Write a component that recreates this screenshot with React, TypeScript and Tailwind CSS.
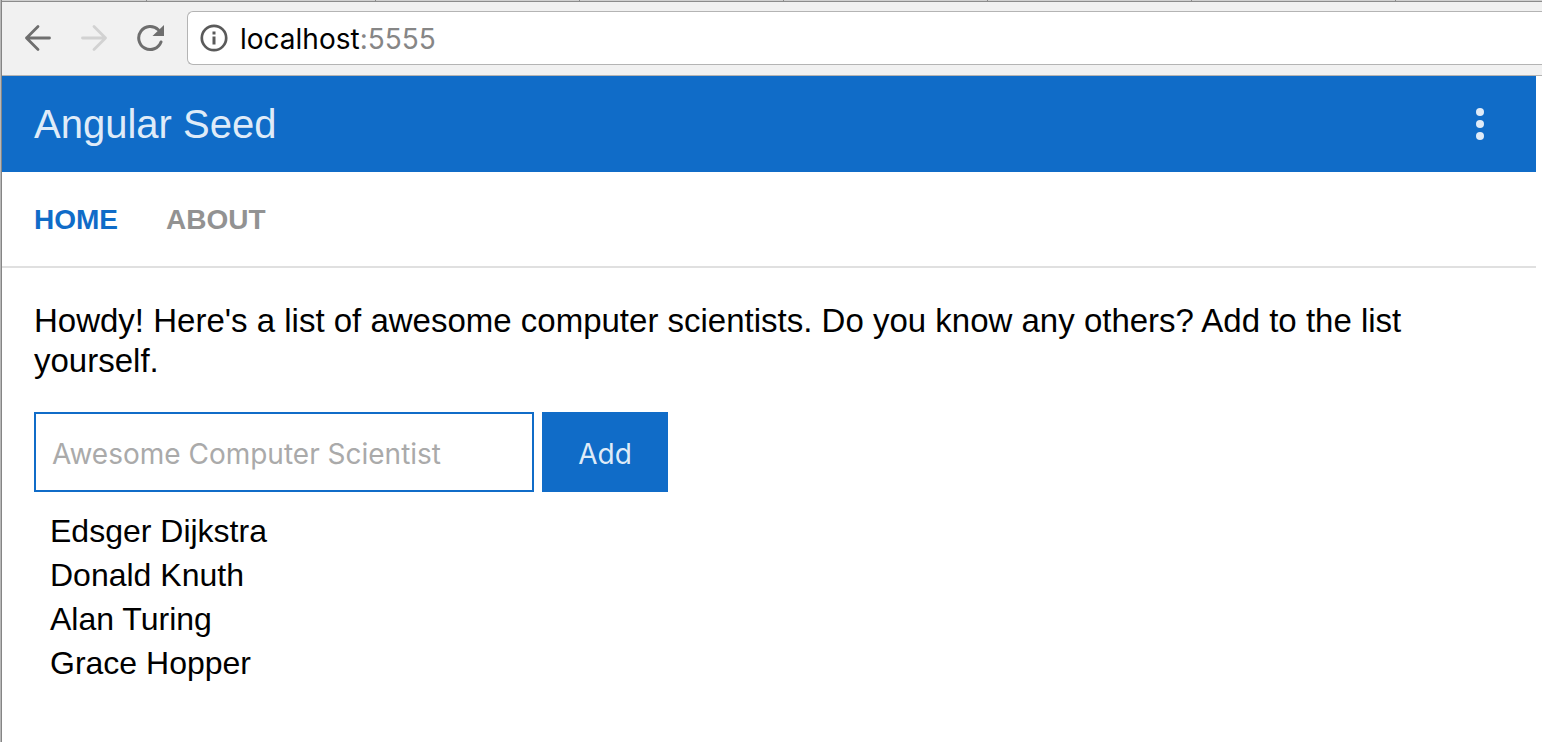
import { useState } from 'react'
import type { FormEvent } from 'react'
import { clsx } from 'clsx'

const NAV_LINKS = [
  { label: 'HOME', href: '#home', active: true },
  { label: 'ABOUT', href: '#about', active: false },
]

const INITIAL_NAMES = ['Edsger Dijkstra', 'Donald Knuth', 'Alan Turing', 'Grace Hopper']

function BackIcon() {
  return (
    <svg width="28" height="28" viewBox="0 0 28 28" fill="none" stroke="currentColor" strokeWidth="2.8" strokeLinecap="round" strokeLinejoin="round" aria-hidden="true">
      <path d="M25.5 14H2.5M14 2.5 2.5 14 14 25.5" />
    </svg>
  )
}

function ForwardIcon() {
  return (
    <svg width="28" height="28" viewBox="0 0 28 28" fill="none" stroke="currentColor" strokeWidth="2.8" strokeLinecap="round" strokeLinejoin="round" aria-hidden="true">
      <path d="M2.5 14H25.5M14 2.5 25.5 14 14 25.5" />
    </svg>
  )
}

function ReloadIcon() {
  return (
    <svg width="28" height="28" viewBox="0 0 28 28" fill="none" aria-hidden="true">
      <path d="M22.3 5.8A11.5 11.5 0 1 0 25 18" stroke="currentColor" strokeWidth="3" strokeLinecap="round" />
      <path d="M28 1V12H16.5Z" fill="currentColor" />
    </svg>
  )
}

function InfoIcon() {
  return (
    <svg width="28" height="28" viewBox="0 0 28 28" fill="none" className="shrink-0 text-[#5a5a5a]" aria-hidden="true">
      <circle cx="14" cy="14" r="12.2" stroke="currentColor" strokeWidth="2.7" />
      <path d="M12.5 7.5h3v3h-3zM12.5 12.5h3v8h-3z" fill="currentColor" />
    </svg>
  )
}

function BrowserBar() {
  return (
    <div>
      {/* Bottom edge of the tab strip */}
      <div className="flex h-[2px] overflow-hidden border-b border-[#8c8c8c] bg-[#d0d0d0]">
        <span className="w-[145px] shrink-0 border-r border-[#8c8c8c]" />
        <span className="w-[229px] shrink-0 border-r border-[#8c8c8c]" />
        <span className="w-[204px] shrink-0 border-r border-[#8c8c8c]" />
        <span className="w-[204px] shrink-0 border-r border-[#8c8c8c]" />
        <span className="w-[204px] shrink-0 border-r border-[#8c8c8c]" />
        <span className="w-[204px] shrink-0 border-r border-[#8c8c8c]" />
        <span className="w-[204px] shrink-0 border-r border-[#8c8c8c]" />
      </div>
      <div className="flex h-[74px] items-center border-b border-[#b4b4b4] bg-[#f1f1f1] pb-px pl-[22px]">
        <div className="flex items-center gap-7 text-[#6e6e6e]">
          <button type="button" aria-label="Back">
            <BackIcon />
          </button>
          <button type="button" aria-label="Forward" disabled className="text-[#d2d2d2]">
            <ForwardIcon />
          </button>
          <button type="button" aria-label="Reload">
            <ReloadIcon />
          </button>
        </div>
        <div className="ml-[23px] flex h-[54px] flex-1 items-center gap-3 rounded-l-md border border-r-0 border-[#b4b4b4] bg-white pl-3 font-['Inter',sans-serif] text-[28px]">
          <InfoIcon />
          <span className="pt-px text-black">
            localhost<span className="text-[#868686]">:5555</span>
          </span>
        </div>
      </div>
    </div>
  )
}

function Toolbar() {
  return (
    <header className="flex h-24 items-center justify-between bg-[#106cc8] pr-11 pl-8 text-[#dfebf8]">
      <h1 className="text-[40px]">Angular Seed</h1>
      <button type="button" aria-label="Menu" className="flex w-6 flex-col items-center gap-1">
        <span className="size-2 rounded-full bg-current" />
        <span className="size-2 rounded-full bg-current" />
        <span className="size-2 rounded-full bg-current" />
      </button>
    </header>
  )
}

function Navbar() {
  return (
    <nav className="flex h-24 items-center gap-12 border-b-2 border-[#e0e0e0] px-8 pt-[2px] text-[28px] font-bold">
      {NAV_LINKS.map((link) => (
        <a key={link.label} href={link.href} className={clsx(link.active ? 'text-[#106cc8]' : 'text-[#929292]')}>
          {link.label}
        </a>
      ))}
    </nav>
  )
}

function HomePage() {
  const [names, setNames] = useState(INITIAL_NAMES)
  const [newName, setNewName] = useState('')

  const addName = (e: FormEvent) => {
    e.preventDefault()
    if (!newName.trim()) return
    setNames([...names, newName.trim()])
    setNewName('')
  }

  return (
    <main className="px-8 pt-8 text-[32px] text-black">
      <p className="pt-px text-[33px] leading-10">
        Howdy! Here's a list of awesome computer scientists. Do you know any others? Add to the list yourself.
      </p>
      <form onSubmit={addName} className="mt-[31px] flex h-20 gap-2 font-['Inter',sans-serif] text-[28px]">
        <input
          type="text"
          aria-label="Awesome Computer Scientist"
          placeholder="Awesome Computer Scientist"
          value={newName}
          onChange={(e) => setNewName(e.target.value)}
          className="w-[500px] border-2 border-[#106cc8] bg-white px-4 pt-1 outline-none placeholder:text-[#aaaaaa]"
        />
        <button type="submit" className="w-[126px] bg-[#106cc8] pt-1 text-[#dfebf8]">
          Add
        </button>
      </form>
      <ul className="mt-4 px-4 pt-px leading-[44px]">
        {names.map((name) => (
          <li key={name}>{name}</li>
        ))}
      </ul>
    </main>
  )
}

export default function App() {
  return (
    <div className="min-h-screen border-l border-[#b8b8b8] bg-white font-['Liberation_Sans',Arial,sans-serif]">
      <div className="min-h-screen border-l border-[#858585]">
        <BrowserBar />
        <div className="mr-[6px]">
          <Toolbar />
          <Navbar />
          <HomePage />
        </div>
      </div>
    </div>
  )
}
